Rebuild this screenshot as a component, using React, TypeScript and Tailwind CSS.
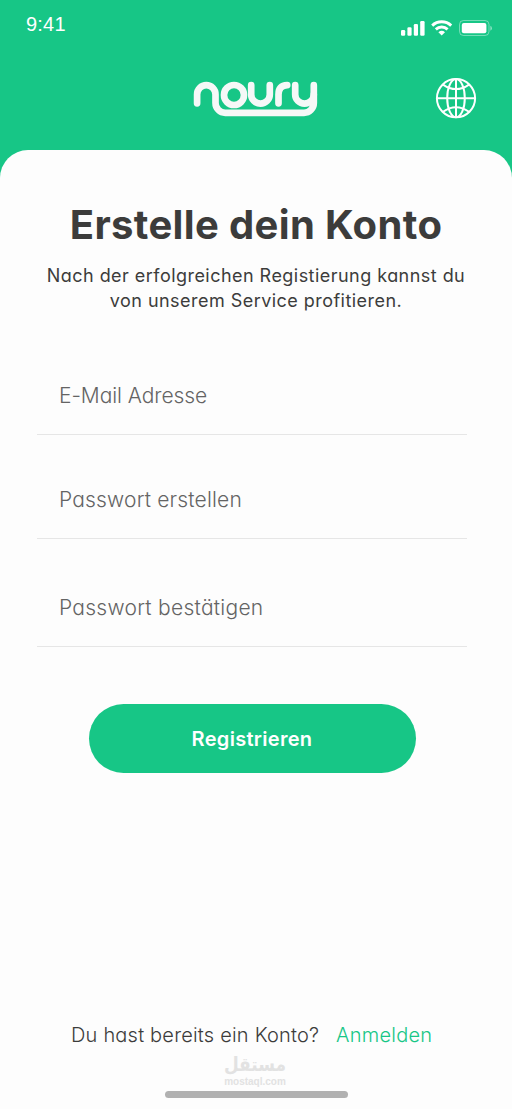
const fields = [
  { id: "email", label: "E-Mail Adresse", row: "h-[85px]", tracking: "tracking-[-0.07px]" },
  { id: "password", label: "Passwort erstellen", row: "h-[104px]", tracking: "tracking-[0.18px]" },
  { id: "confirm", label: "Passwort bestätigen", row: "h-[108px]", tracking: "tracking-[0.27px]" },
];

const StatusIcons = () => (
  <svg className="h-5 w-[94px]" viewBox="400 18 94 20" fill="white">
    <rect x="401" y="30" width="4.2" height="5.8" rx="1.2" />
    <rect x="407.4" y="27.3" width="4.2" height="8.5" rx="1.2" />
    <rect x="413.8" y="24" width="4.2" height="11.8" rx="1.2" />
    <rect x="420.2" y="21" width="4.4" height="14.8" rx="1.2" />
    <g fill="none" stroke="white" strokeWidth="2.9">
      <path d="M432.2 25.6 a13.8 13.8 0 0 1 19 0" />
      <path d="M435.8 29.4 a8.6 8.6 0 0 1 11.8 0" />
    </g>
    <path d="M438.4 32.2 a5 5 0 0 1 6.6 0 L441.7 35.6 Z" />
    <rect x="459.5" y="20.5" width="29.5" height="15" rx="4" fill="none" stroke="white" strokeOpacity="0.4" />
    <rect x="461.8" y="23" width="24.6" height="10.2" rx="2" />
    <path d="M490.4 25.8 a2.8 2.8 0 0 1 0 5 Z" fillOpacity="0.5" />
  </svg>
);

const Logo = () => (
  <svg
    className="h-9 w-[126px]"
    viewBox="193 81 126 36"
    fill="none"
    stroke="#f6f8f7"
    strokeWidth="6.7"
    strokeLinecap="round"
    strokeLinejoin="round"
    role="img"
    aria-label="noury"
  >
    <path d="M197.1 103.3 V94.4 a9.2 9.2 0 0 1 18.4 0 V103 a9.8 9.8 0 0 0 9.8 9.8 H304 a9.8 9.8 0 0 0 9.8 -9.8 V85.2" />
    <circle cx="234" cy="95" r="10" />
    <path d="M251.2 85.2 V94.4 a9.3 9.3 0 0 0 18.6 0 V85.2" />
    <path d="M278.5 103.3 V94.4 Q278.5 85.6 287.2 85.2" />
    <path d="M295.2 85.2 V94.4 a9.3 9.3 0 0 0 18.6 0" />
  </svg>
);

const Globe = () => (
  <svg className="h-[42px] w-[42px]" viewBox="0 0 42 42" fill="none" stroke="white" strokeWidth="2">
    <circle cx="21" cy="21.2" r="19.1" />
    <ellipse cx="21" cy="21.2" rx="8.8" ry="19.1" />
    <path d="M21 2 V40.4 M1.8 21.2 H40.2" />
    <path d="M8 7.6 Q21 16.6 34 7.6 M8 34.8 Q21 25.8 34 34.8" />
  </svg>
);

export default function App() {
  return (
    <div className="flex h-[1109px] w-[512px] flex-col overflow-hidden bg-[#17c686] font-['Inter',sans-serif] text-[#3c3c3b] [font-feature-settings:'cv11']">
      <header className="flex h-[150px] shrink-0 flex-col">
        <div className="flex justify-between pt-3 pr-[18px] pl-[26px] text-white">
          <span className="font-['Liberation_Sans',sans-serif] text-xl leading-6 tracking-[0.2px]">9:41</span>
          <span className="pt-1.5">
            <StatusIcons />
          </span>
        </div>
        <div className="flex items-start justify-between pt-[39px] pr-[35px] pl-[193px]">
          <span className="pt-1">
            <Logo />
          </span>
          <button aria-label="Sprache">
            <Globe />
          </button>
        </div>
      </header>

      <main className="flex grow flex-col rounded-t-[28px] bg-[#fdfdfd]">
        <h1 className="mt-[50px] text-center text-[40px] leading-[50px] font-bold tracking-[0.36px] whitespace-nowrap">
          Erstelle dein Konto
        </h1>
        <p className="mt-[13px] text-center text-lg leading-[25px] tracking-[0.46px] whitespace-nowrap">
          Nach der erfolgreichen Registierung kannst du
          <br />
          von unserem Service profitieren.
        </p>

        <form className="mt-[37px] mr-[45px] ml-[37px] flex flex-col">
          {fields.map((field) => (
            <label key={field.id} className={`flex items-end border-b border-[#e6e6e6] pb-6 pl-[22px] ${field.row}`}>
              <span className={`text-[21px] leading-7 font-light text-[#646464] ${field.tracking}`}>{field.label}</span>
            </label>
          ))}
          <button
            type="button"
            className="mt-[57px] ml-[51.5px] h-[69px] w-[327px] rounded-full bg-[#17c686] pt-px text-xl font-semibold tracking-[0.3px] text-white"
          >
            Registrieren
          </button>
        </form>

        <div className="mt-auto flex h-[88px] flex-col">
          <p className="flex pl-[71px] text-xl leading-7 font-light">
            <span className="w-[265px] tracking-[0.2px] whitespace-nowrap">Du hast bereits ein Konto?</span>
            <a className="tracking-[0.25px] text-[#17c686]">Anmelden</a>
          </p>
          <div className="mt-1 ml-[224px] flex w-[62px] flex-col items-center text-[#e2e2e2]">
            <span className="mb-0.5 scale-y-115 font-['DejaVu_Sans',sans-serif] text-[17px] leading-[22px] font-bold" dir="rtl">
              مستقل
            </span>
            <span className="font-['Liberation_Sans',sans-serif] text-[10px] leading-[10px] font-bold">mostaql.com</span>
          </div>
          <div className="mt-[3.5px] ml-[164.5px] h-[7px] w-[183px] rounded-full bg-[#b1b1b1]" />
        </div>
      </main>
    </div>
  );
}
